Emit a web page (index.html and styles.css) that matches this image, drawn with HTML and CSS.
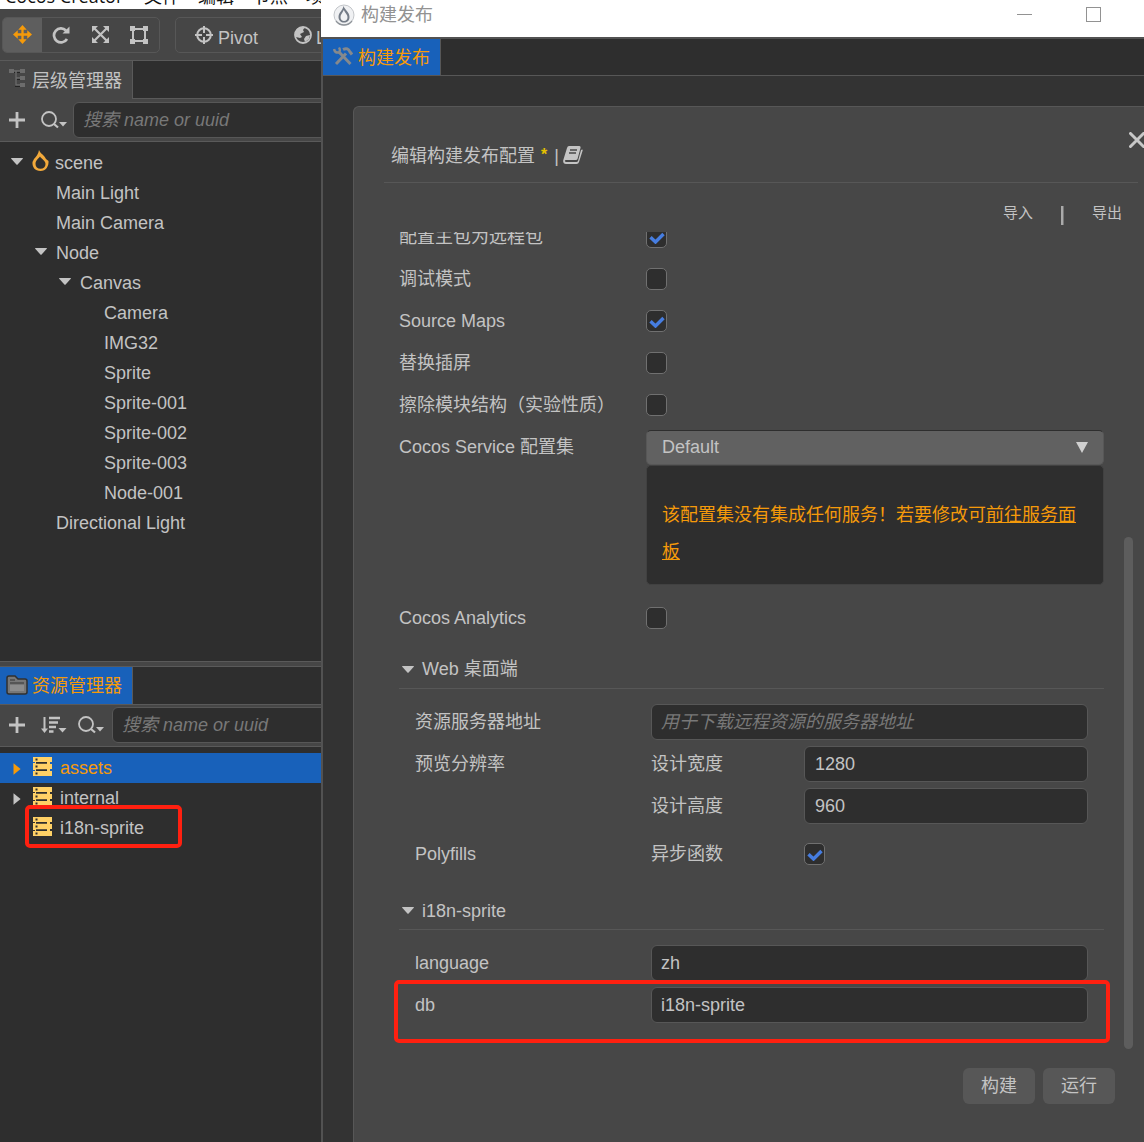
FILE: index.html
```html
<!DOCTYPE html>
<html lang="zh-CN">
<head>
<meta charset="utf-8">
<title>构建发布</title>
<link rel="stylesheet" href="styles.css">
</head>
<body>
<svg class="defs" aria-hidden="true">
  <symbol id="down" viewBox="0 0 12 7"><path d="M0 0.5Q0 0 .6 0H11.4Q12 0 12 .5L6.6 6.6Q6 7 5.4 6.6Z" fill="currentColor"/></symbol>
  <symbol id="right" viewBox="0 0 8 12"><path d="M0.5 0.3L7.6 6L0.5 11.7Z" fill="currentColor"/></symbol>
  <symbol id="check" viewBox="0 0 16 12"><path d="M1.5 5.200L6.5 10L14.5 2" fill="none" stroke="#467de0" stroke-width="3.4"/></symbol>
  <symbol id="plus" viewBox="0 0 16 16"><path d="M8 0V16M0 8H16" stroke="currentColor" stroke-width="2.8"/></symbol>
  <symbol id="search" viewBox="0 0 26 18"><circle cx="8" cy="8" r="7" fill="none" stroke="currentColor" stroke-width="1.8"/><path d="M13 13L17 16.5" stroke="currentColor" stroke-width="2.2"/><path d="M18 11H26L22 15.5Z" fill="currentColor"/></symbol>
  <symbol id="sort" viewBox="0 0 26 18"><path d="M3.5 1V14" stroke="currentColor" stroke-width="2"/><path d="M0 12.5H7L3.5 17Z" fill="currentColor"/><path d="M8 2H19M8 6.5H17M8 11H15M8 15.5H12.500" stroke="currentColor" stroke-width="2.4"/><path d="M17.500 12H25.500L21.500 16.500Z" fill="currentColor"/></symbol>
  <symbol id="db" viewBox="0 0 19 19"><path d="M0 0H19V5H17V7H19V12H17V14H19V19H0V14H2V13H0V6H2V5H0Z" fill="#ffd166"/><path d="M3 5H14V6.800H3ZM3 12.200H14V14H3Z" fill="#2e2e2e"/><path d="M2.500 1.500H4.500V3.500H2.500ZM2.500 8.500H4.500V10.500H2.500ZM2.500 15.500H4.500V17.500H2.500Z" fill="#2e2e2e"/></symbol>
</svg>
<div class="screen">
  <aside class="editor">
    <div class="menubar"><span class="app">Cocos Creator</span><span>文件</span><span>编辑</span><span>节点</span><span>项目</span></div>
    <div class="toolbar">
      <div class="tools">
        <div class="tool active"><svg width="19" height="19" viewBox="0 0 18 18"><path d="M9 2V16M2 9H16" stroke="currentColor" stroke-width="2.200"/><path d="M9 0L13 4.500H5ZM9 18L13 13.500H5ZM0 9L4.500 5V13ZM18 9L13.500 5V13Z" fill="currentColor"/></svg></div>
        <div class="tool"><svg width="18" height="18" viewBox="0 0 18 18"><path d="M14 4.500A7 7 0 1 0 15 13" fill="none" stroke="currentColor" stroke-width="2.700"/><path d="M17.500 .5V7.500H10.500Z" fill="currentColor"/></svg></div>
        <div class="tool"><svg width="17" height="17" viewBox="0 0 17 17"><path d="M2.500 2.500L14.500 14.500M14.500 2.500L2.500 14.500" stroke="currentColor" stroke-width="2.200"/><path d="M0 0H6L0 6ZM17 0V6L11 0ZM0 17V11L6 17ZM17 17H11L17 11Z" fill="currentColor"/></svg></div>
        <div class="tool"><svg width="18" height="18" viewBox="0 0 18 18"><rect x="3" y="3" width="12" height="12" fill="none" stroke="currentColor" stroke-width="2"/><path d="M0 0H5V5H0ZM13 0H18V5H13ZM0 13H5V18H0ZM13 13H18V18H13Z" fill="currentColor"/></svg></div>
      </div>
      <div class="pivot">
        <svg width="18" height="18" viewBox="0 0 18 18" fill="none" stroke="currentColor" stroke-width="2"><circle cx="9" cy="9" r="6.800"/><path d="M9 0V7M9 11V18M0 9H7M11 9H18"/></svg>
        <span class="pivot-label">Pivot</span>
        <svg width="18" height="18" viewBox="0 0 18 18"><circle cx="9" cy="9" r="8" fill="none" stroke="currentColor" stroke-width="1.800"/><path d="M1 9Q1 3 6 1L11 1L9 4L10 6L6 8L8 11L6 12L2 11ZM12 10L16 9L15 13L11 16L10 13Z" fill="currentColor"/></svg>
        <span class="local-label">Local</span>
      </div>
    </div>

    <section class="dock hierarchy">
      <div class="tabs">
        <div class="tab"><svg class="tab-icon" width="20" height="22" viewBox="0 0 20 22"><path d="M5 4H14M8 4V18H15M8 11H14" stroke="#242424" stroke-width="2" fill="none"/><path d="M1 1H6V5H1ZM12 1H17V5H12ZM12 8H17V12H12ZM12 15H17V19H12Z" fill="#6c6c6c"/><path d="M6 3H12M8 3V17H12M8 10H12" stroke="#6c6c6c" stroke-width="1.600" fill="none"/></svg><span>层级管理器</span></div>
      </div>
      <div class="searchbar">
        <svg class="plus" width="16" height="16"><use href="#plus"/></svg>
        <svg class="find" width="26" height="18"><use href="#search"/></svg>
        <div class="searchbox">搜索 name or uuid</div>
      </div>
      <div class="tree">
        <div class="node l0"><svg class="arrow" width="12" height="7"><use href="#down"/></svg><svg class="flame" width="17" height="21" viewBox="0 0 17 21"><path d="M7 0C8.500 4 12 4.500 14 9L16.500 11C17 16 14 21 8.500 21C3 21 0 17 .5 12L2 9C4 7 6.500 4 7 0ZM8 6.500C6 9 3.500 10.500 3.500 14C3.500 17 5.500 18.700 8.500 18.700C11.500 18.700 13.500 17 13.500 14C13.500 10.500 9.500 9 8 6.500Z" fill="#f2a93b" fill-rule="evenodd"/></svg><span>scene</span></div>
        <div class="node l1">Main Light</div>
        <div class="node l1">Main Camera</div>
        <div class="node p1"><svg class="arrow" width="12" height="7"><use href="#down"/></svg><span>Node</span></div>
        <div class="node p2"><svg class="arrow" width="12" height="7"><use href="#down"/></svg><span>Canvas</span></div>
        <div class="node l3">Camera</div>
        <div class="node l3">IMG32</div>
        <div class="node l3">Sprite</div>
        <div class="node l3">Sprite-001</div>
        <div class="node l3">Sprite-002</div>
        <div class="node l3">Sprite-003</div>
        <div class="node l3">Node-001</div>
        <div class="node l1">Directional Light</div>
      </div>
    </section>

    <section class="dock assets">
      <div class="tabs">
        <div class="tab selected"><svg class="tab-icon folder" width="22" height="20" viewBox="0 0 22 20"><path d="M1 3Q1 1 3 1H9L12 4H19Q21 4 21 6V17Q21 19 19 19H3Q1 19 1 17Z" fill="#777" stroke="#303030" stroke-width="1.500"/><path d="M4 5H9M4 8H18" stroke="#4b4b4b" stroke-width="1.500"/><path d="M4 10H18V16H4Z" fill="#8c8c8c"/></svg><span>资源管理器</span></div>
      </div>
      <div class="searchbar">
        <svg class="plus" width="16" height="16"><use href="#plus"/></svg>
        <svg class="sort" width="26" height="18"><use href="#sort"/></svg>
        <svg class="find2" width="26" height="18"><use href="#search"/></svg>
        <div class="searchbox">搜索 name or uuid</div>
      </div>
      <div class="asset-list">
        <div class="asset current"><svg class="caret" width="8" height="12"><use href="#right"/></svg><svg class="dbicon" width="19" height="19"><use href="#db"/></svg><span>assets</span></div>
        <div class="asset"><svg class="caret" width="8" height="12"><use href="#right"/></svg><svg class="dbicon" width="19" height="19"><use href="#db"/></svg><span>internal</span></div>
        <div class="asset"><span class="caret"></span><svg class="dbicon" width="19" height="19"><use href="#db"/></svg><span>i18n-sprite</span></div>
      </div>
    </section>
    <div class="highlight asset-mark"></div>
  </aside>

  <main class="dialog">
    <header class="titlebar">
      <svg class="logo" width="22" height="22" viewBox="0 0 22 22"><circle cx="11" cy="11" r="10" fill="#f0f1f3" stroke="#c3c6ca"/><path d="M3 17A10 10 0 0 0 19 17" fill="none" stroke="#8e9399" stroke-width="1.300"/><path d="M10.500 2C12 6 16.500 8 16.500 13C16.500 17 14 18.500 11 18.500C8 18.500 5.500 16.500 5.500 13C5.500 8.500 9.500 7 10.500 2ZM10.800 6C9.500 9 7.500 10.500 7.500 13C7.500 15.500 9 17 11 17C13 17 14.500 15.500 14.500 13C14.500 10.500 12 9 10.800 6Z" fill="#747c87" fill-rule="evenodd"/></svg>
      <span class="title">构建发布</span>
      <span class="minimize"></span><span class="maximize"></span>
    </header>
    <div class="frame">
      <div class="dialog-tabs">
        <div class="build-tab"><svg width="20" height="20" viewBox="0 0 20 20" fill="none" stroke="#85898d"><path d="M3 18L13 7.500" stroke-width="3"/><path d="M6 6L17.500 18" stroke-width="3"/><path d="M10 3.500Q15 1 17 6L19 8.500" stroke-width="3"/><path d="M1 3Q2 7 5.500 6.500Q8 5 6 1.500" stroke-width="2.400"/></svg><span>构建发布</span></div>
      </div>
      <div class="panel">
        <div class="panel-head"><span class="heading">编辑构建发布配置</span><span class="star">*</span><span class="bar">|</span>
          <svg class="book" width="20" height="18" viewBox="0 0 20 18"><path d="M6 0H16Q18 0 17.500 2L14.500 13Q14 14 13 14H3Q1.500 14.200 2 15.300Q2.300 16 3 16H13.500Q14.500 16 15 15L18 4L19.200 3.500Q20 4 19.500 5L16 16Q15.500 18 13.500 18H3Q-.5 17.500 .3 14L4 2Q4.500 0 6 0Z" fill="#c4c4c4"/><path d="M7 4H14M6 7H13" stroke="#474747" stroke-width="1.400"/></svg>
          <svg class="close" width="16" height="16" viewBox="0 0 16 16"><path d="M1.500 1.500L14.500 14.500M14.500 1.500L1.500 14.500" stroke="#c8c8c8" stroke-width="3" stroke-linecap="round"/></svg>
        </div>
        <div class="transfer"><span>导入</span><span class="divider"></span><span>导出</span></div>
        <div class="viewport">
          <div class="form">
            <div class="row"><label>配置主包为远程包</label><span class="box"><svg width="16" height="12"><use href="#check"/></svg></span></div>
            <div class="row"><label>调试模式</label><span class="box"></span></div>
            <div class="row"><label>Source Maps</label><span class="box"><svg width="16" height="12"><use href="#check"/></svg></span></div>
            <div class="row"><label>替换插屏</label><span class="box"></span></div>
            <div class="row"><label>擦除模块结构（实验性质）</label><span class="box"></span></div>
            <div class="row service"><label>Cocos Service 配置集</label>
              <div class="service-set">
                <div class="select"><span>Default</span><svg width="12" height="11" viewBox="0 0 12 11"><path d="M0 0H12L6 11Z" fill="#d0d0d0"/></svg></div>
                <div class="notice">该配置集没有集成任何服务！若要修改可<u>前往服务面板</u></div>
              </div>
            </div>
            <div class="row analytics"><label>Cocos Analytics</label><span class="box"></span></div>

            <div class="section web"><svg width="12" height="7"><use href="#down"/></svg><span>Web 桌面端</span></div>
            <div class="row sub first"><label>资源服务器地址</label><div class="input hint">用于下载远程资源的服务器地址</div></div>
            <div class="row sub"><label>预览分辨率</label><div class="pair"><span>设计宽度</span><div class="input">1280</div></div></div>
            <div class="row sub"><label></label><div class="pair"><span>设计高度</span><div class="input">960</div></div></div>
            <div class="row sub poly"><label>Polyfills</label><div class="pair"><span>异步函数</span><span class="box"><svg width="16" height="12"><use href="#check"/></svg></span></div></div>

            <div class="section plugin"><svg width="12" height="7"><use href="#down"/></svg><span>i18n-sprite</span></div>
            <div class="row sub first"><label>language</label><div class="input">zh</div></div>
            <div class="row sub"><label>db</label><div class="input">i18n-sprite</div></div>
          </div>
          <div class="scrollbar"></div>
        </div>
        <div class="actions"><span class="button">构建</span><span class="button">运行</span></div>
      </div>
    </div>
    <div class="highlight db-mark"></div>
  </main>
</div>
</body>
</html>
```
FILE: styles.css
```css
* { box-sizing: border-box; }
body {
  margin: 0;
  background: #2e2e2e;
  color: #c3c3c3;
  font: 18px/30px "Liberation Sans", "Noto Sans CJK SC", sans-serif;
}
svg { display: block; flex: none; }
span, label { white-space: nowrap; }
.defs { position: absolute; width: 0; height: 0; }
.screen { display: flex; width: 1144px; height: 1142px; overflow: hidden; }

/* Editor window */
.editor {
  position: relative;
  display: flex;
  flex-direction: column;
  flex: none;
  width: 321px;
  height: 1142px;
  overflow: hidden;
  background: #2e2e2e;
}
.menubar {
  display: flex;
  align-items: flex-end;
  flex: none;
  height: 9px;
  padding-left: 5px;
  overflow: hidden;
  background: #fff;
  color: #111;
  font-family: "Open Sans", "Noto Sans CJK SC", sans-serif;
  line-height: 25px;
}
.menubar span { width: 54px; flex: none; }
.menubar .app { width: 139px; }
.toolbar {
  display: flex;
  flex: none;
  gap: 15px;
  height: 52px;
  padding: 8px 0 8px 2px;
  background: #464646;
  border-bottom: 1px solid #5a5a5a;
}
.tools {
  display: flex;
  flex: none;
  width: 158px;
  height: 36px;
  border: 1px solid #575757;
  border-radius: 5px;
}
.tool { display: flex; align-items: center; justify-content: center; width: 39px; padding: 0 1px 1px 0; }
.tool.active { background: #5e5e5e; color: #f59a0a; border-radius: 4px 0 0 4px; }
.pivot {
  display: flex;
  align-items: center;
  flex: none;
  width: 190px;
  height: 36px;
  padding: 1px 0 0 19px;
  border: 1px solid #575757;
  border-radius: 5px;
}
.pivot svg { margin-top: -2px; }
.pivot-label { width: 81px; padding: 4px 0 0 5px; }
.local-label { padding: 4px 0 0 4px; }

.dock { display: flex; flex-direction: column; flex: none; }
.tabs { display: flex; flex: none; height: 38px; border-bottom: 1px solid #5a5a5a; }
.tab {
  display: flex;
  align-items: center;
  width: 133px;
  height: 38px;
  padding: 2px 0 0 8px;
  background: #464646;
  border-right: 1px solid #5a5a5a;
}
.tab-icon { margin: -4px 4px 0 0; }
.tab.selected { height: 37px; padding: 1px 0 0 6px; background: #1861ba; color: #f59a0a; }
.tab-icon.folder { margin: -2px 4px 0 0; }
.searchbar {
  display: flex;
  align-items: center;
  flex: none;
  height: 43px;
  padding: 0 0 1px 9px;
  background: #464646;
  border-bottom: 1px solid #5a5a5a;
}
.find { margin: 0 6px 0 16px; }
.sort { margin: 0 12px 0 16px; }
.find2 { margin-right: 8px; }
.find2 { margin-left: -1px; }
.searchbox {
  flex: 1 0 260px;
  height: 36px;
  padding-left: 9px;
  background: #2e2e2e;
  border: 1px solid #575757;
  border-radius: 6px;
  color: #787878;
  font-style: italic;
  line-height: 34px;
}
.hierarchy { height: 601px; border-bottom: 1px solid #5a5a5a; }
.tree { padding-top: 6px; }
.node { display: flex; align-items: center; height: 30px; }
.l0 { padding-left: 11px; }
.l1 { padding-left: 56px; }
.p1 { padding-left: 35px; }
.p2 { padding-left: 59px; }
.l3 { padding-left: 104px; }
.arrow { margin: -3px 9px 0 0; }
.flame { margin: -5px 6px 0 0; }
.assets { border-top: 4px solid #464646; }
.assets .tabs { border-top: 1px solid #5a5a5a; height: 39px; }
.assets .searchbar { height: 42px; padding-bottom: 2px; }
.asset-list { padding-top: 6px; }
.asset { display: flex; align-items: center; height: 30px; padding-left: 13px; }
.asset.current { background: #1861ba; color: #f59a0a; }
.caret { width: 8px; margin: 1px 12px 0 0; }
.dbicon { margin: -3px 8px 0 0; }

/* Marker frames over the rows */
.highlight { position: absolute; border: 4px solid #ff2010; border-radius: 5px; }
.asset-mark { left: 25px; top: 805px; width: 157px; height: 43px; }
.db-mark { left: 73px; top: 980px; width: 716px; height: 63px; }

/* Build dialog */
.dialog {
  position: relative;
  display: flex;
  flex-direction: column;
  flex: none;
  width: 823px;
  height: 1142px;
  overflow: hidden;
}
.titlebar {
  display: flex;
  align-items: center;
  flex: none;
  height: 37px;
  padding: 0 43px 8px 12px;
  background: #fff;
  color: #929292;
}
.title { margin-left: 6px; }
.minimize { width: 15px; height: 1px; margin: 0 54px 0 auto; background: #929292; }
.maximize { width: 15px; height: 15px; border: 1px solid #929292; }
.frame {
  display: flex;
  flex-direction: column;
  flex: 1;
  background: #333;
  border: solid #525252;
  border-width: 2px 0 0 2px;
}
.dialog-tabs { display: flex; flex: none; height: 37px; background: #2e2e2e; border-bottom: 1px solid #575757; }
.build-tab {
  display: flex;
  align-items: center;
  gap: 5px;
  width: 118px;
  padding: 2px 0 0 10px;
  background: #1861ba;
  border-right: 1px solid #575757;
  color: #f59a0a;
}
.build-tab svg { margin-top: -5px; }
.panel {
  flex: 1;
  margin: 30px 0 0 30px;
  background: #474747;
  border: solid #575757;
  border-width: 1px 0 0 1px;
  border-radius: 6px 0 0 0;
}
.panel-head {
  display: flex;
  align-items: center;
  width: 754px;
  height: 76px;
  margin-left: 30px;
  padding: 21px 0 0 7px;
  border-bottom: 1px solid #575757;
}
.heading { padding-top: 2px; }
.star { margin: 0 7px 0 6px; color: #e3c000; font-size: 16px; font-weight: bold; }
.bar { margin-right: 4px; padding-top: 1px; }
.close { margin: -31px -7px 0 auto; }
.transfer {
  display: flex;
  align-items: center;
  justify-content: flex-end;
  gap: 28px;
  height: 49px;
  padding: 11px 22px 0 0;
  font-size: 15px;
}
.divider { width: 3px; height: 19px; margin-top: 4px; background: #aaa; border-right: 1px solid #777; }
.viewport { display: flex; height: 817px; overflow: hidden; }
.form { flex: none; width: 705px; margin: -16px 0 0 45px; }
.row { display: flex; align-items: center; height: 42px; }
.row label { flex: none; width: 247px; }
.box {
  display: flex;
  align-items: center;
  justify-content: center;
  flex: none;
  width: 21px;
  height: 22px;
  padding-top: 1px;
  background: #2e2e2e;
  border: 1px solid #707070;
  border-radius: 5px;
}
.service { align-items: flex-start; height: 159px; padding-top: 4px; }
.service label { line-height: 34px; }
.service-set { width: 458px; }
.select {
  display: flex;
  align-items: center;
  justify-content: space-between;
  height: 35px;
  padding: 0 15px 2px;
  background: #616161;
  border: 1px solid #575757;
  border-top-color: #2e2e2e;
  border-radius: 5px;
}
.select svg { margin-top: 2px; }
.notice {
  height: 120px;
  padding: 31px 15px 0;
  background: #2e2e2e;
  border: 1px solid #414141;
  border-radius: 5px;
  color: #f59a0a;
  line-height: 37px;
}
.notice u { text-underline-offset: 1px; text-decoration-thickness: 1px; }
.analytics { margin-top: 12px; }
.section {
  display: flex;
  align-items: center;
  gap: 8px;
  height: 35px;
  padding: 0 0 4px 3px;
  border-bottom: 1px solid #575757;
}
.web { margin-top: 15px; }
.plugin { margin-top: 20px; padding-bottom: 3px; }
.row.sub { padding: 0 16px; }
.row.sub label { width: 236px; }
.first { margin-top: 12px; }
.input {
  flex: 1;
  height: 36px;
  padding-left: 9px;
  background: #2e2e2e;
  border: 1px solid #575757;
  border-radius: 6px;
  line-height: 34px;
}
.hint { color: #787878; font-style: italic; }
.pair { display: flex; flex: 1; align-items: center; }
.pair > span:first-child { width: 153px; }
.pair .input { padding-left: 10px; }
.poly { margin-top: 6px; }
.scrollbar { align-self: flex-end; width: 9px; height: 512px; margin-left: 20px; background: #5d5d5d; border-radius: 5px; }
.actions { display: flex; justify-content: flex-end; gap: 8px; padding: 19px 29px 0 0; }
.button { width: 72px; height: 36px; background: #575757; border-radius: 6px; line-height: 36px; text-align: center; }
```
